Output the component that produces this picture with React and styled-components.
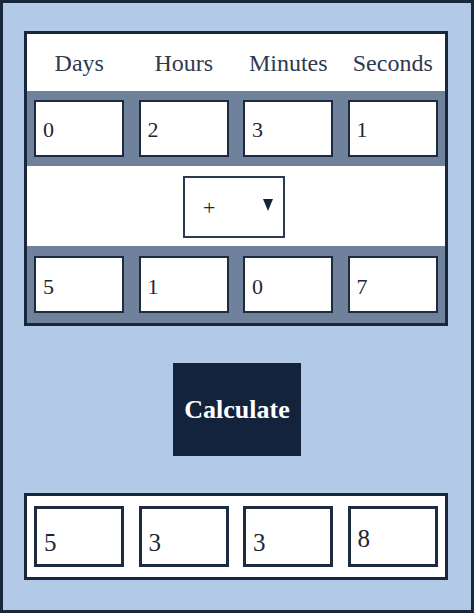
import React from "react";
import styled, { createGlobalStyle } from "styled-components";

const GlobalStyle = createGlobalStyle`
  html, body {
    margin: 0;
    padding: 0;
    background: #b3c9e8;
  }
  * {
    box-sizing: border-box;
  }
  input, select, button {
    font-family: "Liberation Serif", "Times New Roman", serif;
  }
`;

const Page = styled.div`
  height: 613px;
  border: 3px solid #19273d;
  background: #b3c9e8;
  padding: 28px 21px 0;
  font-family: "Liberation Serif", "Times New Roman", serif;
  display: flex;
  flex-direction: column;
  align-items: flex-start;
`;

const Table = styled.div`
  width: 424px;
  border: 3px solid #19273d;
  background: #ffffff;
`;

const Row = styled.div`
  display: grid;
  grid-template-columns: repeat(4, 1fr);
  align-items: center;
  height: ${(p) => p.height}px;
  background: ${(p) => (p.band ? "#6f819b" : "#ffffff")};
`;

const Label = styled.div`
  text-align: center;
  font-size: 24px;
  color: #2c3a50;
  padding-top: 2px;
`;

const Cell = styled.div`
  padding: 0 7px;
`;

const NumberInput = styled.input`
  display: block;
  width: 90px;
  height: 57px;
  border: 2px solid #1d2b40;
  background: #ffffff;
  padding: ${(p) => p.offset || 0}px 0 0 7px;
  font-size: 22px;
  color: #1d2636;
  outline: none;
`;

const OperatorRow = styled.div`
  height: 80px;
  display: flex;
  align-items: center;
  justify-content: center;
  background: #ffffff;
`;

const SelectWrap = styled.div`
  position: relative;
  width: 102px;
  height: 62px;
  margin-left: -4px;
  margin-top: 2px;
`;

const Select = styled.select`
  appearance: none;
  width: 100%;
  height: 100%;
  border: 2px solid #2b3a52;
  border-radius: 0;
  background: #ffffff;
  padding-left: 18px;
  font-size: 22px;
  color: #1d2636;
  outline: none;
`;

const Caret = styled.span`
  position: absolute;
  right: 12px;
  top: 23px;
  width: 0;
  height: 0;
  border-left: 5px solid transparent;
  border-right: 5px solid transparent;
  border-top: 12px solid #16233a;
  pointer-events: none;
`;

const ButtonArea = styled.div`
  width: 424px;
  display: flex;
  justify-content: center;
  padding: 37px 0;
`;

const CalcButton = styled.button`
  width: 128px;
  height: 93px;
  margin-left: 2px;
  border: none;
  background: #13233c;
  color: #ffffff;
  font-weight: 700;
  font-size: 26px;
  cursor: pointer;
`;

const ResultBox = styled.div`
  width: 424px;
  height: 87px;
  border: 3px solid #19273d;
  background: #ffffff;
  display: grid;
  grid-template-columns: repeat(4, 1fr);
  align-items: center;
`;

const ResultCell = styled.div`
  width: 90px;
  height: 61px;
  margin: 0 7px;
  border: 3px solid #1d2b40;
  padding: ${(p) => p.top}px 0 0 7px;
  font-size: 25px;
  color: #1d2636;
  line-height: 1;
`;

const UNITS = ["Days", "Hours", "Minutes", "Seconds"];

const App = () => {
  const [first, setFirst] = React.useState(["0", "2", "3", "1"]);
  const [second, setSecond] = React.useState(["5", "1", "0", "7"]);
  const [op, setOp] = React.useState("+");
  const result = ["5", "3", "3", "8"];

  const update = (setter, list, i) => (e) => {
    const next = [...list];
    next[i] = e.target.value;
    setter(next);
  };

  return (
    <>
      <GlobalStyle />
      <Page>
        <Table>
          <Row height={57}>
            {UNITS.map((u) => (
              <Label key={u}>{u}</Label>
            ))}
          </Row>
          <Row height={75} band>
            {first.map((v, i) => (
              <Cell key={UNITS[i]}>
                <NumberInput
                  value={v}
                  offset={2}
                  onChange={update(setFirst, first, i)}
                />
              </Cell>
            ))}
          </Row>
          <OperatorRow>
            <SelectWrap>
              <Select value={op} onChange={(e) => setOp(e.target.value)}>
                <option value="+">+</option>
                <option value="-">-</option>
              </Select>
              <Caret />
            </SelectWrap>
          </OperatorRow>
          <Row height={77} band>
            {second.map((v, i) => (
              <Cell key={UNITS[i]}>
                <NumberInput
                  value={v}
                  offset={5}
                  onChange={update(setSecond, second, i)}
                />
              </Cell>
            ))}
          </Row>
        </Table>
        <ButtonArea>
          <CalcButton type="button">Calculate</CalcButton>
        </ButtonArea>
        <ResultBox>
          {result.map((v, i) => (
            <ResultCell key={UNITS[i]} top={i === 3 ? 17 : 21}>
              {v}
            </ResultCell>
          ))}
        </ResultBox>
      </Page>
    </>
  );
};

export default App;
